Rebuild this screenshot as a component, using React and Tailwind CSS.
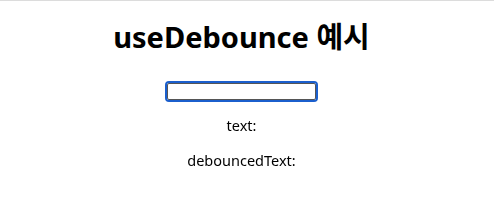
import React, { useState } from 'react';

export default function App() {
    const [text, setText] = useState('');

    return (
        <div
            className="w-[494px] h-[212px] pr-[11px] bg-white border-t border-[#dcdcdc] flex flex-col items-center text-black"
            style={{ fontFamily: '"Noto Sans", "Noto Sans CJK KR", sans-serif' }}
        >
            {/* Title */}
            <h1 className="mt-[16px] text-[29px] font-bold leading-[40px]">useDebounce 예시</h1>

            {/* Input */}
            <input
                autoFocus
                value={text}
                onChange={(e) => setText(e.target.value)}
                className="mt-[26px] w-[149px] h-[17px] px-[2px] text-[13px] border border-[#555] rounded-[2px] outline-2 outline-offset-0 outline-[#1b5fcd]"
            />

            <p className="mt-[15px] text-[14.5px] leading-[20px]">text: {text}</p>
            <p className="mt-[15px] text-[14.5px] leading-[20px]">debouncedText: {text}</p>
        </div>
    );
}
